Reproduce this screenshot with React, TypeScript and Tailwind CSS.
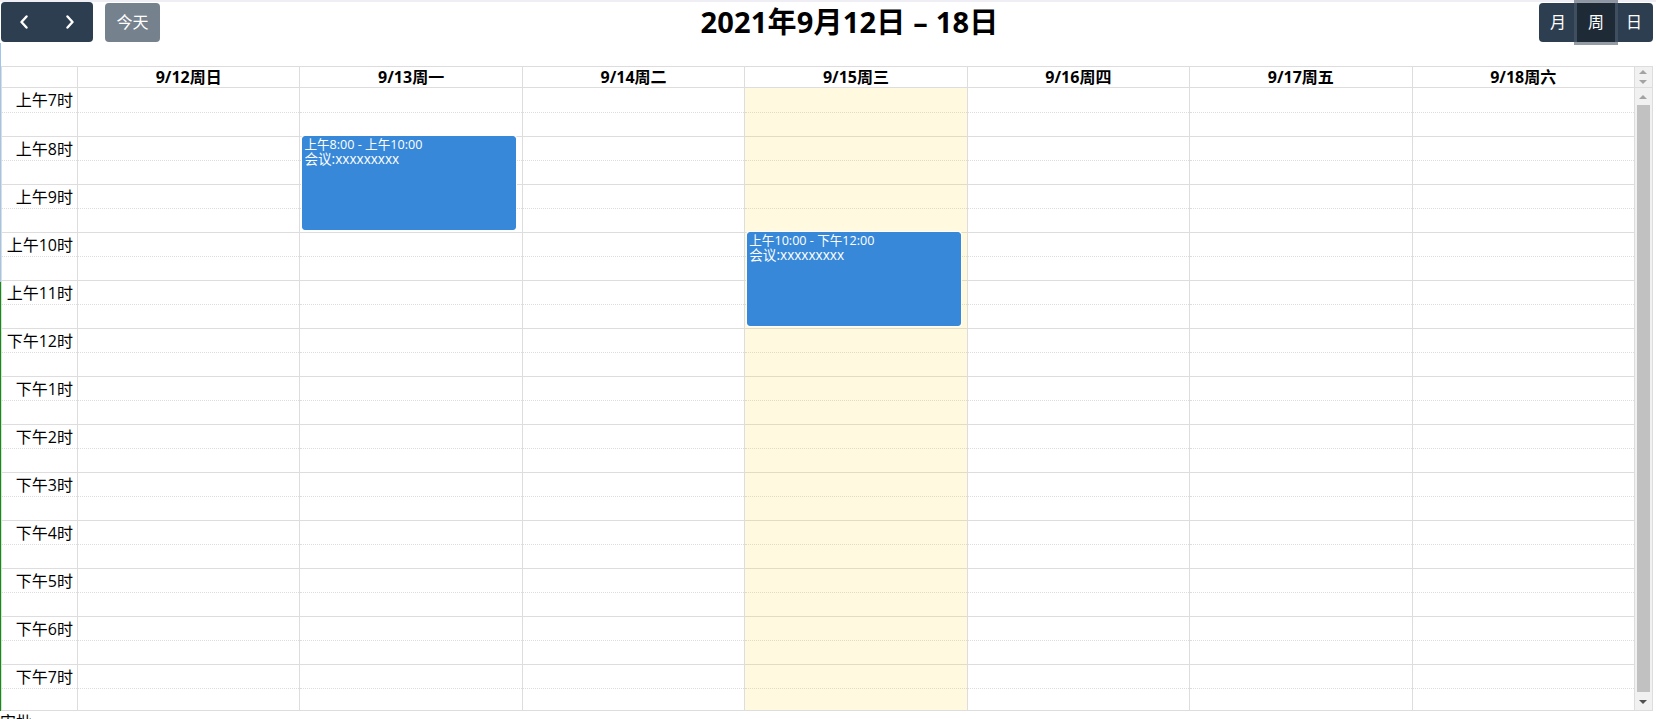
import clsx from 'clsx';

const HOURS = [
  '上午7时',
  '上午8时',
  '上午9时',
  '上午10时',
  '上午11时',
  '下午12时',
  '下午1时',
  '下午2时',
  '下午3时',
  '下午4时',
  '下午5时',
  '下午6时',
  '下午7时',
];

const DAYS = ['9/12周日', '9/13周一', '9/14周二', '9/15周三', '9/16周四', '9/17周五', '9/18周六'];
const TODAY = 3;

type CalEvent = { day: number; pos: string; time: string; title: string };

const EVENTS: CalEvent[] = [
  { day: 1, pos: 'top-[48px]', time: '上午8:00 - 上午10:00', title: '会议:xxxxxxxxx' },
  { day: 3, pos: 'top-[144px]', time: '上午10:00 - 下午12:00', title: '会议:xxxxxxxxx' },
];

function Chevron({ dir }: { dir: 'left' | 'right' }) {
  return (
    <svg width="10" height="14" viewBox="0 0 10 14" fill="none">
      <path
        d={dir === 'left' ? 'M7.5 1.5 L2.5 7 L7.5 12.5' : 'M2.5 1.5 L7.5 7 L2.5 12.5'}
        stroke="#fff"
        strokeWidth="2.4"
        strokeLinecap="round"
        strokeLinejoin="round"
      />
    </svg>
  );
}

function Tri({ up, color }: { up?: boolean; color: string }) {
  return (
    <svg width="8" height="4" viewBox="0 0 8 4">
      <path d={up ? 'M0 4 L4 0 L8 4 Z' : 'M0 0 L4 4 L8 0 Z'} fill={color} />
    </svg>
  );
}

function Slots({ labels }: { labels?: boolean }) {
  return (
    <>
      {HOURS.map((h, i) => (
        <div key={h}>
          <div
            className={clsx(
              'flex h-[24px] items-center justify-end pr-[4px] text-[16px] leading-none text-black',
              i > 0 && 'border-t border-[#ddd]'
            )}
          >
            {labels && h}
          </div>
          <div className="h-[24px] border-t border-dotted border-[#ddd]" />
        </div>
      ))}
    </>
  );
}

function Toolbar() {
  return (
    <div className="mb-[24px] flex h-[40px] items-center justify-between">
      <div className="flex items-center">
        <div className="flex h-[40px] overflow-hidden rounded-[4px] bg-[#2c3e50]">
          <button className="flex w-[46px] items-center justify-center">
            <Chevron dir="left" />
          </button>
          <button className="flex w-[46px] items-center justify-center">
            <Chevron dir="right" />
          </button>
        </div>
        <button className="ml-[12px] h-[39px] w-[55px] rounded-[4px] bg-[#2c3e50] text-[16px] text-white opacity-65">
          今天
        </button>
      </div>
      <h2 className="text-[29px] leading-[34px] font-bold tracking-[0.2px] text-black">
        2021年9月12日 – 18日
      </h2>
      <div className="flex h-[39px] rounded-[4px] bg-[#2c3e50] text-[16px] text-white">
        <button className="w-[38px] rounded-l-[4px]">月</button>
        <button className="relative z-10 w-[38px] bg-[#1e2b37] shadow-[0_0_0_3px_rgba(76,91,106,0.6)]">
          周
        </button>
        <button className="w-[38px] rounded-r-[4px]">日</button>
      </div>
    </div>
  );
}

function Calendar() {
  return (
    <div className="w-[1652px] border border-[#ddd]">
      <div className="flex h-[21px] border-b border-[#ddd]">
        <div className="w-[76px] border-r border-[#ddd]" />
        {DAYS.map((d) => (
          <div
            key={d}
            className="flex-1 border-r border-[#ddd] text-center text-[16px] leading-[20px] font-bold text-black"
          >
            {d}
          </div>
        ))}
        <div className="flex w-[17px] flex-col items-center justify-center gap-[6px] bg-[#f1f1f1]">
          <Tri up color="#a3a3a3" />
          <Tri color="#a3a3a3" />
        </div>
      </div>

      <div className="flex h-[622px] overflow-hidden">
        <div className="w-[76px] shrink-0 border-r border-[#ddd]">
          <Slots labels />
        </div>
        {DAYS.map((d, i) => (
          <div key={d} className="relative flex-1 border-r border-[#ddd]">
            <Slots />
            {i === TODAY && <div className="absolute inset-0 bg-[rgba(255,220,40,0.15)]" />}
            {EVENTS.filter((e) => e.day === i).map((e) => (
              <div
                key={e.time}
                className={clsx(
                  'absolute right-[6px] left-[2px] h-[94px] rounded-[3px] border border-[#3788d8] bg-[#3788d8] px-px pt-px text-white shadow-[0_0_0_1px_#fff]',
                  e.pos
                )}
              >
                <div className="text-[12.6px] leading-[13px] whitespace-nowrap">{e.time}</div>
                <div className="text-[13.6px] leading-[15px]">{e.title}</div>
              </div>
            ))}
          </div>
        ))}
        <div className="flex w-[17px] shrink-0 flex-col bg-[#f1f1f1]">
          <div className="flex h-[17px] items-center justify-center">
            <Tri up color="#a3a3a3" />
          </div>
          <div className="mx-[2px] mb-px flex-1 bg-[#c1c1c1]" />
          <div className="flex h-[17px] items-center justify-center">
            <Tri color="#505050" />
          </div>
        </div>
      </div>
    </div>
  );
}

export default function App() {
  return (
    <div className="min-h-[719px] bg-white font-['Open_Sans','Noto_Sans_CJK_SC',sans-serif]">
      <div className="h-[2px] bg-[#eeeef4]" />
      <div className="flex">
        <div className="flex w-px flex-col">
          <div className="h-[41px]" />
          <div className="h-[239px] bg-[#9fc5e8]" />
          <div className="flex-1 bg-[#109010]" />
        </div>
        <div>
          <Toolbar />
          <Calendar />
        </div>
      </div>
      <div className="text-[16px] leading-[22px] text-black">审批</div>
    </div>
  );
}
